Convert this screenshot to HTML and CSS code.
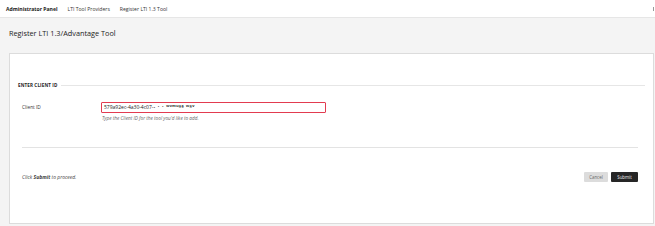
FILE: index.html
```html
<!DOCTYPE html>
<html lang="en">
<head>
    <meta charset="UTF-8">
    <title>Register LTI 1.3 Tool</title>
    <link rel="stylesheet" href="styles.css">
</head>
<body>
    <nav class="breadcrumbs">
        <span class="crumb crumb-root">Administrator Panel</span>
        <span class="crumb">LTI Tool Providers</span>
        <span class="crumb">Register LTI 1.3 Tool</span>
        <span class="nav-edge"></span>
    </nav>
    <main>
        <h1 class="page-title">Register LTI 1.3/Advantage Tool</h1>
        <div class="panel">
            <div class="step">
                <div class="step-head">
                    <h2>ENTER CLIENT ID</h2>
                    <span class="rule"></span>
                </div>
                <div class="field">
                    <label for="clientid">Client ID</label>
                    <div class="field-input">
                        <div class="input" id="clientid">579a92ec-4a30-4c07-<span class="blur">· ˑ ˑ ʷᵛᵐᵘᵃᵉ ʷᵃᵛ</span></div>
                        <p class="help">Type the Client ID for the tool you'd like to add.</p>
                    </div>
                </div>
            </div>
            <div class="submit-row">
                <p class="hint">Click <b>Submit</b> to proceed.</p>
                <div class="buttons">
                    <button class="btn btn-cancel">Cancel</button>
                    <button class="btn btn-submit">Submit</button>
                </div>
            </div>
        </div>
    </main>
</body>
</html>
```

FILE: styles.css
```css
* {
    margin: 0;
    padding: 0;
    box-sizing: border-box;
}

body {
    width: 655px;
    height: 226px;
    overflow: hidden;
    background-color: #f4f4f4;
    font-family: "Open Sans", "Liberation Sans", sans-serif;
    color: #262626;
}

/* top breadcrumb bar */
.breadcrumbs {
    height: 18px;
    background-color: #fff;
    border-bottom: 1px solid #e6e6e6;
    display: flex;
    align-items: center;
    padding-left: 6px;
    font-size: 5.1px;
}
.crumb {
    color: #333;
    margin-right: 10px;
}
.crumb-root {
    font-weight: 700;
    color: #1a1a1a;
}
.nav-edge {
    margin-left: auto;
    width: 1px;
    height: 4px;
    margin-right: 1px;
    background-color: #999;
}

main {
    padding: 0 1px 0 9px;
}

.page-title {
    font-size: 7.3px;
    font-weight: 400;
    color: #222;
    height: 35px;
    line-height: 31px;
}

/* white panel */
.panel {
    background-color: #fff;
    border: 1px solid #dcdcdc;
    height: 171px;
    padding: 26px 8px 0 8px;
}

.step-head {
    display: flex;
    align-items: center;
    height: 10px;
}
.step-head h2 {
    font-size: 4.6px;
    font-weight: 700;
    letter-spacing: 0.1px;
    color: #262626;
}
.rule {
    flex: 1;
    height: 1px;
    margin-left: 4px;
    background-color: #e6e6e6;
}

.field {
    display: flex;
    margin-top: 12px;
    padding-left: 4px;
}
.field label {
    width: 79px;
    font-size: 4.8px;
    color: #333;
    padding-top: 2px;
}
.input {
    width: 225px;
    height: 11px;
    border: 1.5px solid #e23b50;
    border-radius: 1px;
    font-size: 5px;
    line-height: 8px;
    padding-left: 2px;
    color: #222;
}
.blur {
    font-size: 6px;
    font-weight: 700;
    letter-spacing: 0.4px;
}
.help {
    font-size: 4.7px;
    font-style: italic;
    color: #666;
    margin-top: 1.5px;
    padding-left: 1px;
}

.submit-row {
    margin: 26px 7px 0 4px;
    border-top: 1px solid #e3e3e3;
    display: flex;
    align-items: center;
    justify-content: space-between;
    padding-top: 24px;
}
.hint {
    font-size: 5px;
    font-style: italic;
    color: #444;
}
.buttons {
    display: flex;
    gap: 3px;
}
.btn {
    height: 10px;
    border: none;
    border-radius: 1px;
    font-family: "Open Sans", "Liberation Sans", sans-serif;
    font-size: 4.4px;
}
.btn-cancel {
    width: 24px;
    background-color: #dcdcdc;
    color: #666;
}
.btn-submit {
    width: 27px;
    background-color: #262626;
    color: #eee;
}
```
